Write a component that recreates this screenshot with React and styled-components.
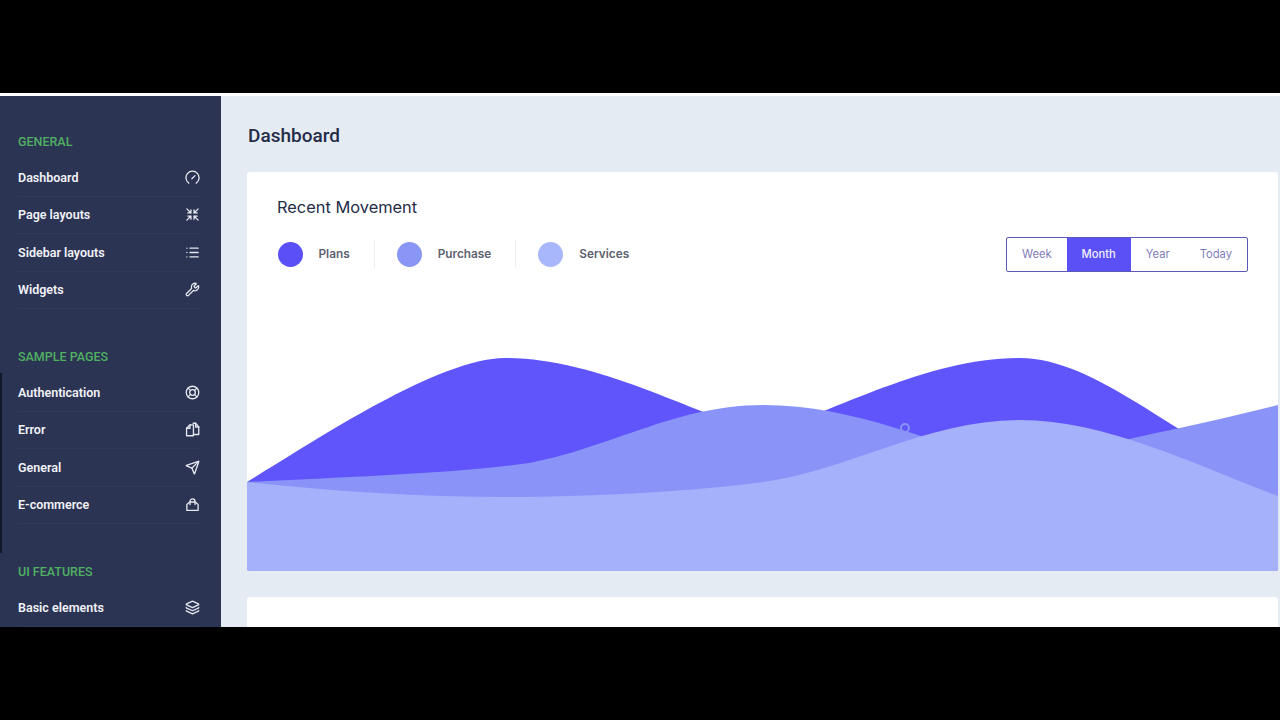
import React from 'react';
import styled, { createGlobalStyle } from 'styled-components';
import { List, Wrench, Send, Layers } from 'lucide-react';

const GlobalS = createGlobalStyle`
  html, body { margin: 0; padding: 0; background: #000; }
  * { box-sizing: border-box; }
`;

const FrameS = styled.div`
  width: 1280px;
  height: 720px;
  background: #000;
  padding-top: 93px;
  overflow: hidden;
`;

const ScreenS = styled.div`
  height: 534px;
  background: #fff;
  padding-top: 3px;
  overflow: hidden;
`;

const LayoutS = styled.div`
  display: flex;
  height: 531px;
`;

const SidebarS = styled.aside`
  position: relative;
  width: 221px;
  flex-shrink: 0;
  background: #2c3454;
  padding: 36.500px 21px 0 18px;
  overflow: hidden;
  font-family: Roboto, sans-serif;
`;

const EdgeS = styled.div`
  position: absolute;
  left: 0;
  top: 277px;
  width: 2px;
  height: 180px;
  background: #12172c;
`;

const GroupS = styled.div`
  margin-bottom: 38.5px;
`;

const GroupTitleS = styled.div`
  height: 18px;
  line-height: 18px;
  margin-bottom: 8.5px;
  font-size: 12.5px;
  font-weight: 500;
  color: #4fb062;
`;

const ItemS = styled.div`
  display: flex;
  justify-content: space-between;
  align-items: center;
  height: 37.5px;
  border-bottom: 1px solid #323a5c;
  font-size: 12.5px;
  font-weight: 600;
  color: #f1f2f7;

  svg {
    color: #e6e8f0;
    flex-shrink: 0;
  }
`;

const MainS = styled.main`
  flex: 1;
  min-width: 0;
  background: #e5ebf2;
  padding: 0 2px 0 26px;
  overflow: hidden;
`;

const PageTitleS = styled.h1`
  margin: 0;
  height: 76px;
  padding-left: 1px;
  line-height: 79px;
  font-family: Roboto, sans-serif;
  font-size: 19px;
  font-weight: 500;
  color: #252c48;
`;

const CardS = styled.section`
  background: #fff;
  border-radius: 3px;
  overflow: hidden;
  margin-bottom: 26px;
  font-family: Inter, sans-serif;
`;

const CardTitleS = styled.h2`
  margin: 0;
  padding: 25px 30px 0;
  line-height: 20px;
  font-size: 16.4px;
  font-weight: 400;
  color: #252c48;
`;

const ToolbarS = styled.div`
  display: flex;
  justify-content: space-between;
  align-items: center;
  padding: 0 30px 0 30.5px;
  margin-top: 19.5px;
`;

const LegendS = styled.div`
  display: flex;
  align-items: center;
`;

const LegendItemS = styled.div`
  display: flex;
  align-items: center;
  height: 28px;
  padding-right: 24px;
  margin-right: 22px;
  border-right: 1px solid ${(props) => (props.$last ? 'transparent' : '#eceef3')};
  font-size: 11.8px;
  font-weight: 600;
  color: #5e6270;
`;

const DotS = styled.span`
  width: 25px;
  height: 25px;
  border-radius: 50%;
  margin-right: 16px;
  background: ${(props) => props.$color};
`;

const SwitchS = styled.div`
  display: flex;
  height: 35px;
  border: 1px solid #5b58b8;
  border-radius: 2px;
`;

const SwitchButtonS = styled.div`
  display: flex;
  align-items: center;
  padding: 0 15px;
  font-size: 11.2px;
  font-weight: ${(props) => (props.$active ? 500 : 400)};
  background: ${(props) => (props.$active ? '#5b50f5' : 'transparent')};
  color: ${(props) => (props.$active ? '#f2f1ff' : '#7f7db8')};
`;

const ChartS = styled.svg`
  display: block;
  width: 100%;
  height: 230px;
  margin-top: 69.5px;
`;

const EmptyCardS = styled.section`
  height: 60px;
  background: #fff;
  border-radius: 3px;
`;

const stroke = {
  fill: 'none',
  stroke: 'currentColor',
  strokeWidth: 2.1,
  strokeLinecap: 'round',
  strokeLinejoin: 'round',
};

function GaugeIcon() {
  return (
    <svg width='15' height='15' viewBox='0 0 24 24' {...stroke}>
      <path d='M6 21a10.500 10.500 0 1 1 12 0' />
      <path d='M11 14l5-5' />
    </svg>
  );
}

function ArrowsIcon() {
  return (
    <svg width='15' height='15' viewBox='0 0 24 24' {...stroke}>
      <path d='M3 3l6.500 6.500M9.500 4.500v5h-5' />
      <path d='M21 3l-6.500 6.500M14.500 4.500v5h5' />
      <path d='M3 21l6.500-6.500M9.500 19.500v-5h-5' />
      <path d='M21 21l-6.500-6.500M14.500 19.500v-5h5' />
    </svg>
  );
}

function RingIcon() {
  return (
    <svg width='15' height='15' viewBox='0 0 24 24' {...stroke}>
      <circle cx='12' cy='12' r='10' />
      <circle cx='12' cy='12' r='4.500' />
      <path d='M5 5l4 4M19 5l-4 4M5 19l4-4M19 19l-4-4' />
    </svg>
  );
}

function PagesIcon() {
  return (
    <svg width='15' height='15' viewBox='0 0 24 24' {...stroke}>
      <path d='M2.500 10L8 4.500h5.500V22h-11z' />
      <path d='M8 4.500V10H2.500' />
      <path d='M13 2h4v6h5v12h-8.500' />
      <path d='M17 2l5 6' />
    </svg>
  );
}

function BagIcon() {
  return (
    <svg width='15' height='15' viewBox='0 0 24 24' {...stroke}>
      <path d='M3 21.500V12l4.500-4h9l4.500 4v9.500z' />
      <path d='M8 12V7a4 4 0 0 1 8 0v5' />
    </svg>
  );
}

const iconProps = { size: 15, strokeWidth: 2.1 };

const groups = [
  {
    title: 'GENERAL',
    items: [
      ['Dashboard', <GaugeIcon />],
      ['Page layouts', <ArrowsIcon />],
      ['Sidebar layouts', <List {...iconProps} />],
      ['Widgets', <Wrench {...iconProps} />],
    ],
  },
  {
    title: 'SAMPLE PAGES',
    items: [
      ['Authentication', <RingIcon />],
      ['Error', <PagesIcon />],
      ['General', <Send {...iconProps} />],
      ['E-commerce', <BagIcon />],
    ],
  },
  {
    title: 'UI FEATURES',
    items: [['Basic elements', <Layers {...iconProps} />]],
  },
];

const legend = [
  ['Plans', '#5b4ff8'],
  ['Purchase', '#8a96f6'],
  ['Services', '#a8b6fb'],
];

const ranges = ['Week', 'Month', 'Year', 'Today'];

function App() {
  return (
    <FrameS>
      <GlobalS />
      <ScreenS>
        <LayoutS>
          <SidebarS>
            <EdgeS />
            {groups.map((group) => (
              <GroupS key={group.title}>
                <GroupTitleS>{group.title}</GroupTitleS>
                {group.items.map(([label, icon]) => (
                  <ItemS key={label}>
                    {label}
                    {icon}
                  </ItemS>
                ))}
              </GroupS>
            ))}
          </SidebarS>

          <MainS>
            <PageTitleS>Dashboard</PageTitleS>
            <CardS>
              <CardTitleS>Recent Movement</CardTitleS>
              <ToolbarS>
                <LegendS>
                  {legend.map(([label, color], i) => (
                    <LegendItemS key={label} $last={i === legend.length - 1}>
                      <DotS $color={color} />
                      {label}
                    </LegendItemS>
                  ))}
                </LegendS>
                <SwitchS>
                  {ranges.map((range) => (
                    <SwitchButtonS key={range} $active={range === 'Month'}>
                      {range}
                    </SwitchButtonS>
                  ))}
                </SwitchS>
              </ToolbarS>
              <ChartS viewBox='0 0 1031 230' preserveAspectRatio='none'>
                <path
                  fill='#6055fb'
                  d='M0 141C60 105 190 17 258 17C350 17 440 70 516 92C590 70 680 17 773 17C850 17 930 100 1031 141V230H0Z'
                />
                <circle cx='658' cy='87' r='4' fill='none' stroke='#8a94f8' strokeWidth='2' />
                <path
                  fill='#8a94f8'
                  d='M0 141C80 137 190 133 258 125C345 118 420 64 516 64C610 64 690 105 773 125C840 105 950 85 1031 64V230H0Z'
                />
                <path
                  fill='#a5b1fb'
                  d='M0 141C80 150 170 156 258 156C350 156 450 150 516 141C600 130 680 79 773 79C860 79 950 125 1031 155V230H0Z'
                />
              </ChartS>
            </CardS>
            <EmptyCardS />
          </MainS>
        </LayoutS>
      </ScreenS>
    </FrameS>
  );
}

export default App;
